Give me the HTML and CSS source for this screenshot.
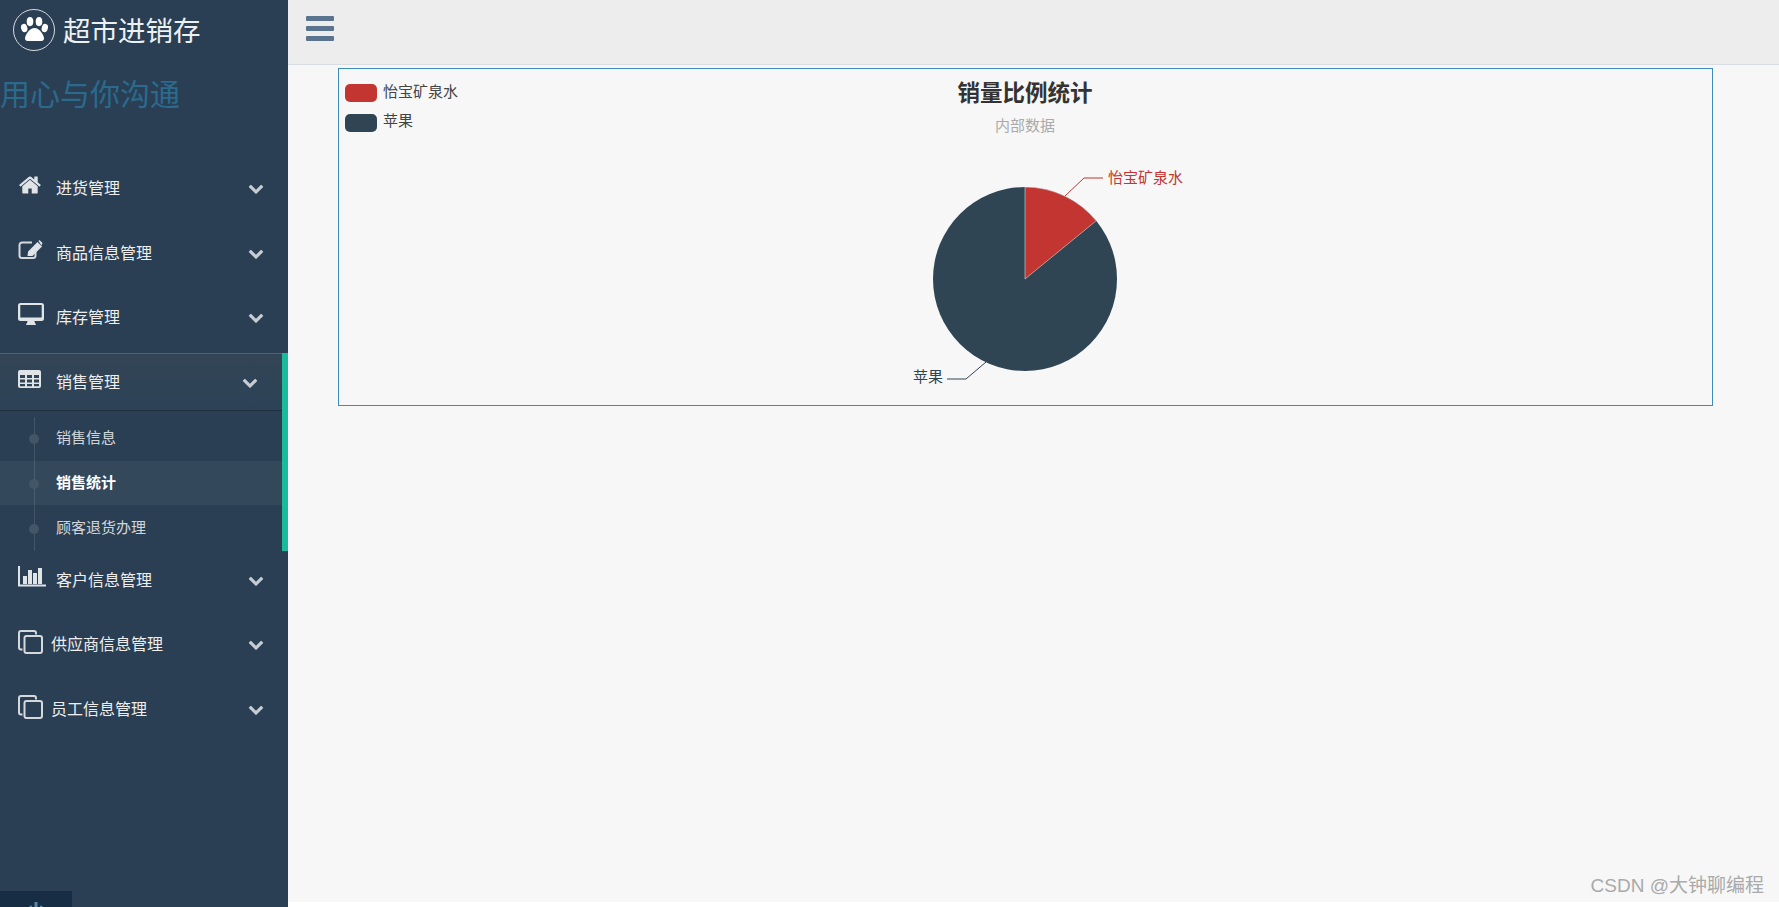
FILE: index.html
```html
<!DOCTYPE html>
<html lang="zh-CN">
	<head>
		<meta charset="UTF-8" />
		<meta name="viewport" content="width=device-width, initial-scale=1.0" />
		<title>超市进销存</title>
		<link rel="stylesheet" href="styles.css">
	</head>
	<body>
		<div class="page">
			<aside class="sidebar">
				<div class="brand">
					<span class="brand-logo">
						<svg viewBox="0 0 27 24" width="27" height="24"><g fill="#fff"><ellipse cx="3.200" cy="11" rx="3.100" ry="4.200" transform="rotate(-15 3.200 11)" /><ellipse cx="9" cy="4.600" rx="3.300" ry="4.600" /><ellipse cx="18" cy="4.600" rx="3.300" ry="4.600" /><ellipse cx="23.800" cy="11" rx="3.100" ry="4.200" transform="rotate(15 23.800 11)" /><path d="M13.500 11c4.500 0 9.500 6.500 9.500 10.500 0 2-1.500 2.500-3.500 2.500h-12C5.500 24 4 23.500 4 21.500 4 17.500 9 11 13.500 11z" /></g></svg>
					</span>
					<span class="brand-name">超市进销存</span>
				</div>
				<div class="slogan">用心与你沟通</div>

				<ul class="nav">
					<li class="nav-item">
						<span class="nav-icon">
							<svg viewBox="0 0 1792 1792" width="24" height="24"><path d="M1472 992v480q0 26-19 45t-45 19h-384v-384h-256v384h-384q-26 0-45-19t-19-45v-480q0-1 .5-3t.5-3l575-474 575 474q1 2 1 6zm223-69l-62 74q-8 9-21 11h-3q-13 0-21-7l-692-577-692 577q-12 8-24 7-13-2-21-11l-62-74q-8-10-7-23.500t11-21.500l719-599q32-26 76-26t76 26l244 204v-195q0-14 9-23t23-9h192q14 0 23 9t9 23v408l219 182q10 8 11 21.500t-7 23.500z" /></svg>
						</span>
						<span class="nav-text">进货管理</span>
						<svg class="chevron" viewBox="0 0 1792 1792" width="16" height="16"><path d="M1683 808l-742 741q-19 19-45 19t-45-19l-742-741q-19-19-19-45.500t19-45.500l166-165q19-19 45-19t45 19l531 531 531-531q19-19 45-19t45 19l166 165q19 19 19 45.500t-19 45.500z" /></svg>
					</li>
					<li class="nav-item">
						<span class="nav-icon">
							<svg viewBox="0 0 25 20" width="25" height="20"><path class="line" d="M17.500 12v3.500a2.500 2.500 0 0 1-2.500 2.500H4a2.500 2.500 0 0 1-2.500-2.500V5A2.500 2.500 0 0 1 4 2.500h10" /><path d="M9.500 16l.6-4.500L19.500 2 24 6.500 14.500 16zM20.500 1l1-1 3 3-1 2.500z" /></svg>
						</span>
						<span class="nav-text">商品信息管理</span>
						<svg class="chevron" viewBox="0 0 1792 1792" width="16" height="16"><path d="M1683 808l-742 741q-19 19-45 19t-45-19l-742-741q-19-19-19-45.500t19-45.500l166-165q19-19 45-19t45 19l531 531 531-531q19-19 45-19t45 19l166 165q19 19 19 45.500t-19 45.500z" /></svg>
					</li>
					<li class="nav-item">
						<span class="nav-icon">
							<svg viewBox="0 0 26 22" width="26" height="22"><path d="M2.500 0h21A2.500 2.500 0 0 1 26 2.500v13a2.500 2.500 0 0 1-2.500 2.500h-7c0 1.500 1 2.500 1.500 3.300 0 .4-.3.700-.7.700H8.700c-.4 0-.7-.3-.7-.7.5-.8 1.500-1.800 1.500-3.300h-7A2.500 2.500 0 0 1 0 15.500v-13A2.500 2.500 0 0 1 2.500 0zM2.300 2v12.500h21.400V2z" fill-rule="evenodd" /></svg>
						</span>
						<span class="nav-text">库存管理</span>
						<svg class="chevron" viewBox="0 0 1792 1792" width="16" height="16"><path d="M1683 808l-742 741q-19 19-45 19t-45-19l-742-741q-19-19-19-45.500t19-45.500l166-165q19-19 45-19t45 19l531 531 531-531q19-19 45-19t45 19l166 165q19 19 19 45.500t-19 45.500z" /></svg>
					</li>
					<li class="nav-group">
						<div class="nav-item nav-item-active">
							<span class="nav-icon">
								<svg viewBox="0 0 23 18" width="23" height="18"><path d="M2 0h19a2 2 0 0 1 2 2v14a2 2 0 0 1-2 2H2a2 2 0 0 1-2-2V2a2 2 0 0 1 2-2zm0 5v3h5V5zm7 0v3h5V5zm7 0v3h5V5zM2 9.500v3h5v-3zm7 0v3h5v-3zm7 0v3h5v-3zM2 14v2.200h5V14zm7 0v2.200h5V14zm7 0v2.200h5V14z" fill-rule="evenodd" /></svg>
							</span>
							<span class="nav-text">销售管理</span>
							<svg class="chevron" viewBox="0 0 1792 1792" width="16" height="16"><path d="M1683 808l-742 741q-19 19-45 19t-45-19l-742-741q-19-19-19-45.500t19-45.500l166-165q19-19 45-19t45 19l531 531 531-531q19-19 45-19t45 19l166 165q19 19 19 45.500t-19 45.500z" /></svg>
						</div>
						<ul class="child-menu">
							<li class="child-item">销售信息</li>
							<li class="child-item child-item-current">销售统计</li>
							<li class="child-item">顾客退货办理</li>
						</ul>
					</li>
					<li class="nav-item">
						<span class="nav-icon">
							<svg viewBox="0 0 28 21" width="28" height="21"><path d="M0 0h2v18.500h26v2H0z" /><path d="M5 10h4v8H5zM10 4h4v14h-4zM15 7h4v11h-4zM20 2h4v16h-4z" /></svg>
						</span>
						<span class="nav-text">客户信息管理</span>
						<svg class="chevron" viewBox="0 0 1792 1792" width="16" height="16"><path d="M1683 808l-742 741q-19 19-45 19t-45-19l-742-741q-19-19-19-45.500t19-45.500l166-165q19-19 45-19t45 19l531 531 531-531q19-19 45-19t45 19l166 165q19 19 19 45.500t-19 45.500z" /></svg>
					</li>
					<li class="nav-item">
						<span class="nav-icon nav-icon-copy">
							<svg viewBox="0 0 25 24" width="25" height="24"><path class="line" d="M4.500 19.500H3a2 2 0 0 1-2-2V3a2 2 0 0 1 2-2h13a2 2 0 0 1 2 2v1.500" /><rect class="line" x="6.500" y="6" width="17.500" height="17" rx="2" /></svg>
						</span>
						<span class="nav-text">供应商信息管理</span>
						<svg class="chevron" viewBox="0 0 1792 1792" width="16" height="16"><path d="M1683 808l-742 741q-19 19-45 19t-45-19l-742-741q-19-19-19-45.500t19-45.500l166-165q19-19 45-19t45 19l531 531 531-531q19-19 45-19t45 19l166 165q19 19 19 45.500t-19 45.500z" /></svg>
					</li>
					<li class="nav-item">
						<span class="nav-icon nav-icon-copy">
							<svg viewBox="0 0 25 24" width="25" height="24"><path class="line" d="M4.500 19.500H3a2 2 0 0 1-2-2V3a2 2 0 0 1 2-2h13a2 2 0 0 1 2 2v1.500" /><rect class="line" x="6.500" y="6" width="17.500" height="17" rx="2" /></svg>
						</span>
						<span class="nav-text">员工信息管理</span>
						<svg class="chevron" viewBox="0 0 1792 1792" width="16" height="16"><path d="M1683 808l-742 741q-19 19-45 19t-45-19l-742-741q-19-19-19-45.500t19-45.500l166-165q19-19 45-19t45 19l531 531 531-531q19-19 45-19t45 19l166 165q19 19 19 45.500t-19 45.500z" /></svg>
					</li>
				</ul>

				<div class="sidebar-footer">
					<svg viewBox="0 0 20 20" width="20" height="20"><path class="power" d="M6 4.500a8 8 0 1 0 8 0M10 0v8" /></svg>
				</div>
			</aside>

			<div class="right">
				<header class="topbar">
					<div class="menu-toggle">
						<span></span>
						<span></span>
						<span></span>
					</div>
				</header>
				<main class="content">
					<div class="chart-box">
						<svg class="chart" viewBox="0 0 1373 336" width="1373" height="336">
							<!-- box starts at 339,69 -->
							<rect x="6" y="15" width="32" height="18" rx="5" fill="#c23531" />
							<text class="legend-text" x="44" y="28">怡宝矿泉水</text>
							<rect x="6" y="45" width="32" height="18" rx="5" fill="#2f4554" />
							<text class="legend-text" x="44" y="57">苹果</text>

							<text class="chart-title" x="686" y="32" text-anchor="middle">销量比例统计</text>
							<text class="chart-sub" x="686" y="62" text-anchor="middle">内部数据</text>

							<circle cx="686" cy="210" r="92" fill="#2f4554" />
							<path d="M686 210V118A92 92 0 0 1 757.200 151.800Z" fill="#c23531" stroke="#f7f7f7" stroke-width=".5" />

							<polyline points="726,127 745,109 764,109" fill="none" stroke="#c23531" />
							<text class="pie-label" x="769" y="114" fill="#c23531">怡宝矿泉水</text>
							<polyline points="647,293 627,310 608,310" fill="none" stroke="#2f4554" />
							<text class="pie-label" x="574" y="313" fill="#2f4554">苹果</text>
						</svg>
					</div>
				</main>
			</div>
		</div>
		<div class="watermark">CSDN @大钟聊编程</div>
	</body>
</html>
```

FILE: styles.css
```css
* {
	padding: 0;
	margin: 0;
	box-sizing: border-box;
}
html, body {
	height: 100%;
	overflow: hidden;
}
body {
	font-family: "Noto Sans CJK SC", "Liberation Sans", sans-serif;
	background-color: #fff;
}
ul {
	list-style: none;
}
.page {
	display: flex;
	height: 907px;
}

/* sidebar */
.sidebar {
	position: relative;
	width: 288px;
	flex-shrink: 0;
	background-color: #2a3f54;
}
.brand {
	display: flex;
	align-items: center;
	height: 60px;
	padding-left: 13px;
}
.brand-logo {
	display: flex;
	align-items: center;
	justify-content: center;
	width: 42px;
	height: 42px;
	padding-bottom: 2px;
	border: 1px solid #d5d9dd;
	border-radius: 50%;
}
.brand-name {
	margin-left: 8px;
	margin-bottom: 3px;
	font-size: 27.5px;
	line-height: 42px;
	color: #ecf0f1;
}
.slogan {
	height: 68px;
	font-size: 30px;
	line-height: 64px;
	color: #2b6a8c;
}
.nav {
	padding-top: 31.5px;
}
.nav-item {
	display: flex;
	align-items: center;
	height: 57px;
	margin-bottom: 7.5px;
	padding-left: 18px;
	font-size: 16px;
	color: #eee;
}
.nav-icon {
	display: flex;
	width: 38px;
	flex-shrink: 0;
	margin-bottom: 6px;
	fill: #e0e4e7;
}
.nav-icon-copy {
	width: 33px;
	margin-bottom: 4px;
}
.nav-icon .line {
	fill: none;
	stroke: #d6d9dc;
	stroke-width: 2;
}
.nav-text {
	flex: 1;
	margin-bottom: 2px;
}
.chevron {
	margin-right: 24px;
	fill: #c5ccd3;
}

.nav-group {
	border-right: 6px solid #1abb9c;
	margin-bottom: 0;
}
.nav-item-active {
	margin-bottom: 0;
	background: linear-gradient(#334556, #2c4257);
	box-shadow: rgba(0, 0, 0, .25) 0 1px 0, inset rgba(255, 255, 255, .16) 0 1px 0;
}
.child-menu {
	position: relative;
	height: 141px;
	padding-top: 6px;
}
.child-menu::before {
	content: "";
	position: absolute;
	left: 34px;
	top: 7px;
	bottom: 0;
	width: 1px;
	background-color: #425668;
}
.child-item {
	position: relative;
	height: 45px;
	padding-left: 56px;
	font-size: 15px;
	line-height: 42px;
	color: rgba(255, 255, 255, .8);
}
.child-item::before {
	content: "";
	position: absolute;
	left: 29px;
	top: 18px;
	width: 10px;
	height: 10px;
	border-radius: 50%;
	background-color: #425668;
}
.child-item-current {
	height: 44px;
	margin-bottom: 1px;
	font-weight: bold;
	color: #fff;
	background-color: rgba(255, 255, 255, .05);
}
.sidebar-footer {
	position: absolute;
	left: 0;
	bottom: 0;
	width: 72px;
	height: 16px;
	overflow: hidden;
	background-color: #172d44;
	text-align: center;
	padding-top: 11px;
}
.power {
	fill: none;
	stroke: #5a87a8;
	stroke-width: 3;
}

/* right side */
.right {
	flex: 1;
	height: 902px;
	background-color: #f7f7f7;
}
.topbar {
	height: 65px;
	padding: 16px 0 0 18px;
	background-color: #ededed;
	border-bottom: 1px solid #d9dee4;
}
.menu-toggle {
	display: flex;
	flex-direction: column;
	gap: 5px;
	width: 28px;
}
.menu-toggle span {
	height: 5px;
	border-radius: 1px;
	background-color: #5a738e;
}
.content {
	padding: 3px 66px 0 50px;
}
.chart-box {
	height: 338px;
	border: 1px solid #3c8dbc;
}
.chart {
	display: block;
}
.legend-text {
	font-size: 15px;
	fill: #444;
}
.chart-title {
	font-size: 22.5px;
	font-weight: bold;
	fill: #333;
}
.chart-sub {
	font-size: 15px;
	fill: #aaa;
}
.pie-label {
	font-size: 15px;
}

.watermark {
	position: absolute;
	right: 15px;
	bottom: 9px;
	font-family: "Liberation Sans", "Noto Sans CJK SC", sans-serif;
	font-size: 19px;
	line-height: 24px;
	color: #aaa;
}
```
